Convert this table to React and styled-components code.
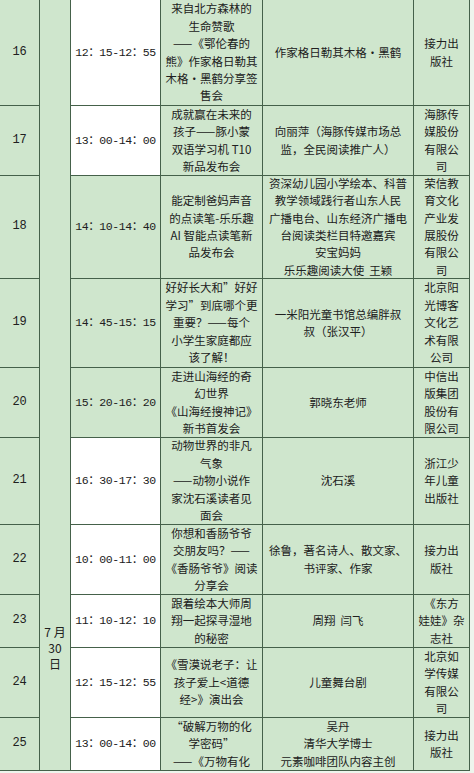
import React from "react";
import styled, { createGlobalStyle } from "styled-components";

const GlobalStyle = createGlobalStyle`
  html, body {
    margin: 0;
    padding: 0;
    background: #eef5ed;
  }
  body {
    font-family: "Noto Sans CJK SC", "Noto Sans", sans-serif;
    color: #202020;
  }
`;

const Page = styled.div`
  width: 474px;
  height: 773px;
  overflow: hidden;
  background: #eef5ed;
`;

const Table = styled.div`
  display: grid;
  grid-template-columns: 39px 30px 89px 101px 150px 55px;
  grid-template-rows: 105px 69px 102px 88px 69px 86px 69px 52px 69px 52px;
  gap: 1px;
  width: max-content;
  padding: 0 1px 1px 0;
  background: #45614a;
`;

const Cell = styled.div`
  display: flex;
  flex-direction: column;
  align-items: center;
  justify-content: center;
  overflow: hidden;
  background: ${(p) => (p.$white ? "#ffffff" : "#cfe6cd")};
  font-size: 11.5px;
  line-height: 17.4px;
  text-align: center;
`;

const NumCell = styled(Cell)`
  font-family: "Liberation Mono", "Noto Sans CJK SC", monospace;
  font-size: 12px;
  letter-spacing: -0.3px;
`;

const TimeCell = styled(Cell)`
  font-family: "Liberation Mono", "Noto Sans CJK SC", monospace;
  font-size: 11.5px;
  letter-spacing: -0.4px;
`;

const DateCell = styled(Cell)`
  grid-column: 2;
  grid-row: 1 / -1;
  justify-content: flex-end;
  padding-bottom: 98px;
  line-height: 16px;
  font-size: 12px;
`;

const Line = styled.span`
  display: block;
  white-space: pre;
`;

const rows = [
  {
    no: "16",
    time: "12：15-12：55",
    white: true,
    title: ["来自北方森林的", "生命赞歌", "——《鄂伦春的", "熊》作家格日勒其", "木格·黑鹤分享签", "售会"],
    guest: ["作家格日勒其木格·黑鹤"],
    pub: ["接力出", "版社"],
  },
  {
    no: "17",
    time: "13：00-14：00",
    white: true,
    title: ["成就赢在未来的", "孩子——豚小蒙", "双语学习机 T10", "新品发布会"],
    guest: ["向丽萍（海豚传媒市场总", "监，全民阅读推广人）"],
    pub: ["海豚传", "媒股份", "有限公", "司"],
  },
  {
    no: "18",
    time: "14：10-14：40",
    title: ["能定制爸妈声音", "的点读笔-乐乐趣", "AI 智能点读笔新", "品发布会"],
    guest: [
      "资深幼儿园小学绘本、科普",
      "教学领域践行者山东人民",
      "广播电台、山东经济广播电",
      "台阅读类栏目特邀嘉宾",
      "安宝妈妈",
      "乐乐趣阅读大使  王颖",
    ],
    pub: ["荣信教", "育文化", "产业发", "展股份", "有限公", "司"],
  },
  {
    no: "19",
    time: "14：45-15：15",
    title: ["好好长大和”好好", "学习”到底哪个更", "重要？——每个", "小学生家庭都应", "该了解！"],
    guest: ["一米阳光童书馆总编胖叔", "叔（张汉平）"],
    pub: ["北京阳", "光博客", "文化艺", "术有限", "公司"],
  },
  {
    no: "20",
    time: "15：20-16：20",
    title: ["走进山海经的奇", "幻世界", "《山海经搜神记》", "新书首发会"],
    guest: ["郭晓东老师"],
    pub: ["中信出", "版集团", "股份有", "限公司"],
  },
  {
    no: "21",
    time: "16：30-17：30",
    white: true,
    title: ["动物世界的非凡", "气象", "——动物小说作", "家沈石溪读者见", "面会"],
    guest: ["沈石溪"],
    pub: ["浙江少", "年儿童", "出版社"],
  },
  {
    no: "22",
    time: "10：00-11：00",
    white: true,
    title: ["你想和香肠爷爷", "交朋友吗？——", "《香肠爷爷》阅读", "分享会"],
    guest: ["徐鲁，著名诗人、散文家、", "书评家、作家"],
    pub: ["接力出", "版社"],
  },
  {
    no: "23",
    time: "11：10-12：10",
    white: true,
    title: ["跟着绘本大师周", "翔一起探寻湿地", "的秘密"],
    guest: ["周翔  闫飞"],
    pub: ["《东方", "娃娃》杂", "志社"],
  },
  {
    no: "24",
    time: "12：15-12：55",
    white: true,
    title: ["《雪漠说老子：让", "孩子爱上<道德", "经>》演出会"],
    guest: ["儿童舞台剧"],
    pub: ["北京如", "学传媒", "有限公", "司"],
  },
  {
    no: "25",
    time: "13：00-14：00",
    white: true,
    title: ["“破解万物的化", "学密码”", "——《万物有化"],
    guest: ["吴丹", "清华大学博士", "元素咖啡团队内容主创"],
    pub: ["接力出", "版社"],
  },
];

function Lines({ items }) {
  return items.map((text, i) => <Line key={i}>{text}</Line>);
}

function App() {
  return (
    <Page>
      <GlobalStyle />
      <Table>
        <DateCell>
          <Line>7 月</Line>
          <Line>30</Line>
          <Line>日</Line>
        </DateCell>
        {rows.map((row) => (
          <React.Fragment key={row.no}>
            <NumCell style={{ gridColumn: 1 }}>{row.no}</NumCell>
            <TimeCell $white={row.white} style={{ gridColumn: 3 }}>
              {row.time}
            </TimeCell>
            <Cell>
              <Lines items={row.title} />
            </Cell>
            <Cell>
              <Lines items={row.guest} />
            </Cell>
            <Cell>
              <Lines items={row.pub} />
            </Cell>
          </React.Fragment>
        ))}
      </Table>
    </Page>
  );
}

export default App;
